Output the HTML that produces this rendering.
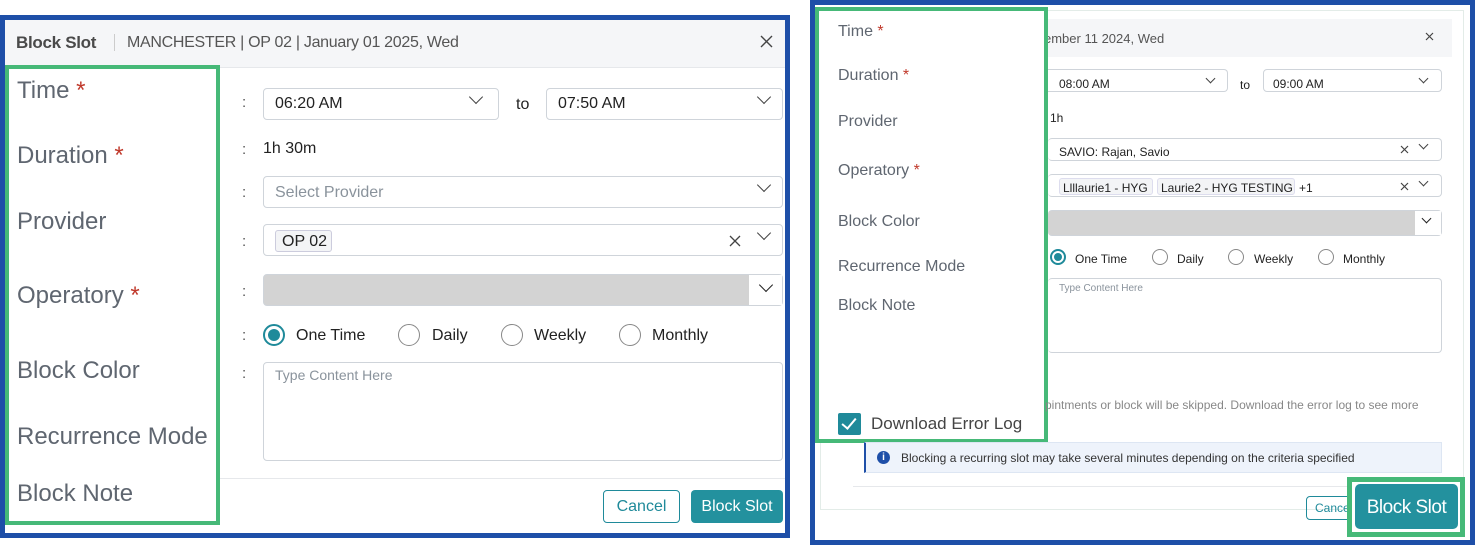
<!DOCTYPE html>
<html><head><style>
*{box-sizing:border-box;margin:0;padding:0}
body{width:1475px;height:545px;background:#fff;position:relative;overflow:hidden;font-family:"Liberation Sans",sans-serif;color:#222}
.a{position:absolute}
.sel{position:absolute;border:1px solid #cfd4da;border-radius:4px;background:#fff}
.chev{position:absolute;width:10px;height:10px;border-right:1.3px solid #444;border-bottom:1.3px solid #444;transform:rotate(45deg)}
.lbl{position:absolute;color:#5f6670}
.req{color:#c0392b}
.radio{position:absolute;border:1px solid #888;border-radius:50%;background:#fff}
.col{position:absolute;color:#555}
svg.x{position:absolute}
</style></head><body>

<!-- LEFT PANEL -->
<div class="a" style="left:0;top:15px;width:790px;height:523px;border:5px solid #1e4fa8"></div>
<div class="a" style="left:5px;top:20px;width:780px;height:48px;background:#f5f6f8;border-bottom:1px solid #e6e8eb"></div>
<div class="a" style="left:16px;top:33px;font-size:17px;font-weight:bold;color:#4a4a4a;letter-spacing:-0.3px">Block Slot</div>
<div class="a" style="left:114px;top:34px;width:1px;height:17px;background:#ccc"></div>
<div class="a" style="left:127px;top:34px;font-size:16px;color:#555;letter-spacing:-0.3px">MANCHESTER | OP 02 | January 01 2025, Wed</div>
<svg class="x" style="left:760px;top:35px" width="13" height="13"><path d="M1 1L12 12M12 1L1 12" stroke="#444" stroke-width="1.4"/></svg>
<div class="a" style="left:5px;top:65px;width:215px;height:460px;border:4px solid #46b978"></div>
<div class="lbl" style="left:17px;top:77px;font-size:24px">Time<span class="req"> *</span></div>
<div class="lbl" style="left:17px;top:142px;font-size:24px">Duration<span class="req"> *</span></div>
<div class="lbl" style="left:17px;top:208px;font-size:24px">Provider</div>
<div class="lbl" style="left:17px;top:282px;font-size:24px">Operatory<span class="req"> *</span></div>
<div class="lbl" style="left:17px;top:357px;font-size:24px">Block Color</div>
<div class="lbl" style="left:17px;top:423px;font-size:24px">Recurrence Mode</div>
<div class="lbl" style="left:17px;top:480px;font-size:24px">Block Note</div>

<div class="col" style="left:242px;top:94px;font-size:15px">:</div>
<div class="sel" style="left:263px;top:88px;width:236px;height:32px"></div>
<div class="a" style="left:275px;top:95px;font-size:16px">06:20 AM</div>
<div class="chev" style="left:471px;top:92px"></div>
<div class="a" style="left:516px;top:96px;font-size:16px">to</div>
<div class="sel" style="left:546px;top:88px;width:237px;height:32px"></div>
<div class="a" style="left:558px;top:95px;font-size:16px">07:50 AM</div>
<div class="chev" style="left:759px;top:92px"></div>

<div class="col" style="left:242px;top:141px;font-size:15px">:</div>
<div class="a" style="left:263px;top:140px;font-size:16px">1h 30m</div>

<div class="col" style="left:242px;top:184px;font-size:15px">:</div>
<div class="sel" style="left:263px;top:176px;width:520px;height:32px"></div>
<div class="a" style="left:275px;top:184px;font-size:16px;color:#8a939c">Select Provider</div>
<div class="chev" style="left:759px;top:180px"></div>

<div class="col" style="left:242px;top:233px;font-size:15px">:</div>
<div class="sel" style="left:263px;top:224px;width:520px;height:32px"></div>
<div class="a" style="left:275px;top:230px;width:57px;height:22px;border:1px solid #ccd;border-radius:3px;background:#f3f4f6"></div>
<div class="a" style="left:282px;top:233px;font-size:16px">OP 02</div>
<svg class="x" style="left:729px;top:235px" width="12" height="12"><path d="M1 1L11 11M11 1L1 11" stroke="#444" stroke-width="1.3"/></svg>
<div class="chev" style="left:759px;top:228px"></div>

<div class="col" style="left:242px;top:283px;font-size:15px">:</div>
<div class="sel" style="left:263px;top:274px;width:520px;height:32px;background:#d3d3d3"></div>
<div class="a" style="left:749px;top:275px;width:33px;height:30px;background:#fff"></div>
<div class="chev" style="left:761px;top:280px;border-color:#222"></div>

<div class="col" style="left:242px;top:327px;font-size:15px">:</div>
<div class="radio" style="left:263px;top:324px;width:22px;height:22px;border:2px solid #1f8a9a"></div>
<div class="a" style="left:268px;top:329px;width:12px;height:12px;border-radius:50%;background:#1f8a9a"></div>
<div class="a" style="left:296px;top:327px;font-size:16px">One Time</div>
<div class="radio" style="left:398px;top:324px;width:22px;height:22px"></div>
<div class="a" style="left:432px;top:327px;font-size:16px">Daily</div>
<div class="radio" style="left:501px;top:324px;width:22px;height:22px"></div>
<div class="a" style="left:534px;top:327px;font-size:16px">Weekly</div>
<div class="radio" style="left:619px;top:324px;width:22px;height:22px"></div>
<div class="a" style="left:652px;top:327px;font-size:16px">Monthly</div>

<div class="col" style="left:242px;top:365px;font-size:15px">:</div>
<div class="sel" style="left:263px;top:362px;width:520px;height:99px"></div>
<div class="a" style="left:275px;top:367px;font-size:14px;color:#8a939c">Type Content Here</div>

<div class="a" style="left:220px;top:478px;width:565px;height:1px;background:#e6e8eb"></div>
<div class="a" style="left:603px;top:490px;width:77px;height:33px;border:1px solid #1f8a9a;border-radius:4px;color:#1f8a9a;font-size:16px;text-align:center;line-height:31px">Cancel</div>
<div class="a" style="left:691px;top:490px;width:92px;height:33px;background:#23919e;border-radius:4px;color:#fff;font-size:16px;text-align:center;line-height:33px">Block Slot</div>

<!-- RIGHT PANEL -->
<div class="a" style="left:810px;top:0;width:665px;height:545px;border:5px solid #1e4fa8"></div>
<div class="a" style="left:820px;top:10px;width:644px;height:500px;border:1px solid #e3ece8"></div>
<div class="a" style="left:1040px;top:19px;width:412px;height:38px;background:#f5f6f8"></div>
<div class="a" style="left:1044px;top:31px;font-size:13px;color:#555">ember 11 2024, Wed</div>
<svg class="x" style="left:1425px;top:32px" width="9" height="9"><path d="M1 1L8 8M8 1L1 8" stroke="#444" stroke-width="1.2"/></svg>
<div class="a" style="left:815px;top:7px;width:233px;height:436px;border:4px solid #46b978;background:#fff"></div>
<div class="lbl" style="left:838px;top:23px;font-size:16px">Time<span class="req"> *</span></div>
<div class="lbl" style="left:838px;top:67px;font-size:16px">Duration<span class="req"> *</span></div>
<div class="lbl" style="left:838px;top:113px;font-size:16px">Provider</div>
<div class="lbl" style="left:838px;top:162px;font-size:16px">Operatory<span class="req"> *</span></div>
<div class="lbl" style="left:838px;top:213px;font-size:16px">Block Color</div>
<div class="lbl" style="left:838px;top:258px;font-size:16px">Recurrence Mode</div>
<div class="lbl" style="left:838px;top:297px;font-size:16px">Block Note</div>
<div class="a" style="left:838px;top:413px;width:23px;height:22px;background:#1f8a9a;border-radius:2px"></div>
<div class="a" style="left:845px;top:415px;width:8px;height:14px;border-right:2px solid #fff;border-bottom:2px solid #fff;transform:rotate(40deg)"></div>
<div class="a" style="left:871px;top:414px;font-size:17px;color:#444">Download Error Log</div>

<div class="sel" style="left:1048px;top:69px;width:180px;height:23px;border-left:none;border-radius:0 4px 4px 0"></div>
<div class="a" style="left:1059px;top:77px;font-size:12px">08:00 AM</div>
<div class="chev" style="left:1207px;top:75px;width:7px;height:7px"></div>
<div class="a" style="left:1240px;top:78px;font-size:12px">to</div>
<div class="sel" style="left:1263px;top:69px;width:179px;height:23px"></div>
<div class="a" style="left:1273px;top:77px;font-size:12px">09:00 AM</div>
<div class="chev" style="left:1420px;top:75px;width:7px;height:7px"></div>
<div class="a" style="left:1050px;top:111px;font-size:12px">1h</div>
<div class="sel" style="left:1048px;top:138px;width:394px;height:23px;border-left:none"></div>
<div class="a" style="left:1059px;top:145px;font-size:12px">SAVIO: Rajan, Savio</div>
<svg class="x" style="left:1400px;top:145px" width="9" height="9"><path d="M1 1L8 8M8 1L1 8" stroke="#444" stroke-width="1.2"/></svg>
<div class="chev" style="left:1420px;top:141px;width:7px;height:7px"></div>
<div class="sel" style="left:1048px;top:174px;width:394px;height:23px;border-left:none"></div>
<div class="a" style="left:1059px;top:178px;width:94px;height:17px;border:1px solid #dde;border-radius:3px;background:#f3f4f6"></div>
<div class="a" style="left:1063px;top:181px;font-size:12px">Llllaurie1 - HYG</div>
<div class="a" style="left:1157px;top:178px;width:138px;height:17px;border:1px solid #dde;border-radius:3px;background:#f3f4f6"></div>
<div class="a" style="left:1161px;top:181px;font-size:12px">Laurie2 - HYG TESTING</div>
<div class="a" style="left:1299px;top:181px;font-size:12px">+1</div>
<svg class="x" style="left:1400px;top:182px" width="9" height="9"><path d="M1 1L8 8M8 1L1 8" stroke="#444" stroke-width="1.2"/></svg>
<div class="chev" style="left:1420px;top:178px;width:7px;height:7px"></div>
<div class="sel" style="left:1048px;top:210px;width:394px;height:26px;background:#d3d3d3;border-left:none"></div>
<div class="a" style="left:1415px;top:211px;width:26px;height:24px;background:#fff"></div>
<div class="chev" style="left:1423px;top:215px;width:7px;height:7px;border-color:#222"></div>
<div class="radio" style="left:1050px;top:249px;width:16px;height:16px;border:2px solid #1f8a9a"></div>
<div class="a" style="left:1054px;top:253px;width:8px;height:8px;border-radius:50%;background:#1f8a9a"></div>
<div class="a" style="left:1075px;top:252px;font-size:12px">One Time</div>
<div class="radio" style="left:1152px;top:249px;width:16px;height:16px"></div>
<div class="a" style="left:1177px;top:252px;font-size:12px">Daily</div>
<div class="radio" style="left:1228px;top:249px;width:16px;height:16px"></div>
<div class="a" style="left:1254px;top:252px;font-size:12px">Weekly</div>
<div class="radio" style="left:1318px;top:249px;width:16px;height:16px"></div>
<div class="a" style="left:1343px;top:252px;font-size:12px">Monthly</div>
<div class="sel" style="left:1048px;top:278px;width:394px;height:75px;border-left:none"></div>
<div class="a" style="left:1059px;top:283px;font-size:10px;color:#8a939c">Type Content Here</div>
<div class="a" style="left:1045px;top:398px;font-size:12px;color:#888">pintments or block will be skipped. Download the error log to see more</div>
<div class="a" style="left:864px;top:442px;width:578px;height:31px;background:#eef3fb;border:1px solid #dde6f3;border-left:2px solid #1e4fa8"></div>
<div class="a" style="left:877px;top:451px;width:13px;height:13px;border-radius:50%;background:#1e4fa8;color:#fff;font-size:10px;font-weight:bold;text-align:center;line-height:13px">i</div>
<div class="a" style="left:901px;top:451px;font-size:12px;color:#333">Blocking a recurring slot may take several minutes depending on the criteria specified</div>
<div class="a" style="left:853px;top:486px;width:600px;height:1px;background:#e6e8eb"></div>
<div class="a" style="left:1306px;top:496px;width:50px;height:24px;border:1px solid #1f8a9a;border-radius:4px;color:#1f8a9a;font-size:12px;line-height:22px;padding-left:8px">Cancel</div>
<div class="a" style="left:1347px;top:477px;width:118px;height:60px;border:5px solid #46b978;background:#fff"></div>
<div class="a" style="left:1355px;top:484px;width:103px;height:45px;background:#23919e;border-radius:5px;color:#fff;font-size:19px;text-align:center;line-height:47px;letter-spacing:-0.5px">Block Slot</div>
</body></html>
